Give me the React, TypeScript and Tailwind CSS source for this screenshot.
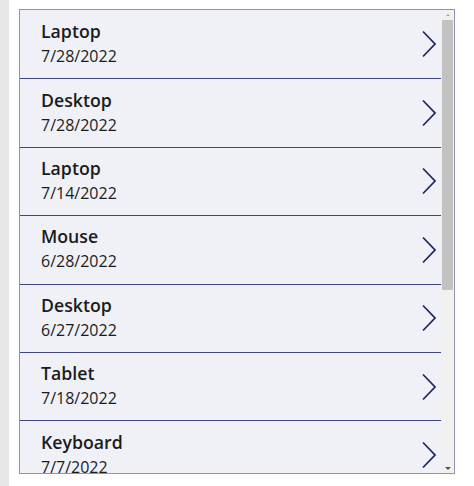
import React from "react";

const items = [
  { name: "Laptop", date: "7/28/2022" },
  { name: "Desktop", date: "7/28/2022" },
  { name: "Laptop", date: "7/14/2022" },
  { name: "Mouse", date: "6/28/2022" },
  { name: "Desktop", date: "6/27/2022" },
  { name: "Tablet", date: "7/18/2022" },
  { name: "Keyboard", date: "7/7/2022" },
];

function Chevron() {
  return (
    <svg width="16" height="28" viewBox="0 0 16 28" className="shrink-0">
      <path d="M2 1.5 L14 14 L2 26.5" fill="none" stroke="#1f2a63" strokeWidth="1.8" />
    </svg>
  );
}

export default function App() {
  return (
    <div
      className="flex w-[474px] h-[486px] bg-white"
      style={{ fontFamily: '"Open Sans", "Noto Sans", sans-serif' }}
    >
      <div className="w-[9px] h-full bg-[#e6e6e6]" />
      <div className="pl-[10px] pt-[9px]">
        <div className="relative flex w-[436px] h-[465px] border border-[#8e93b6] bg-[#eff1f7] overflow-hidden">
          <div className="flex-1 flex flex-col">
            {items.map((it, i) => (
              <div
                key={i}
                className={`flex items-center shrink-0 h-[68.4px] pl-[21px] pr-[4px] ${
                  i > 0 ? "border-t border-[#3d4682]" : ""
                }`}
              >
                <div className="flex-1 flex flex-col text-[#1b1b1b] -mt-[2px]">
                  <span className="text-[17.7px] font-semibold leading-[25px]">{it.name}</span>
                  <span className="text-[16px] leading-[24px]">{it.date}</span>
                </div>
                <Chevron />
              </div>
            ))}
          </div>
          <div className="w-[13px] h-full bg-[#f1f1f1] flex flex-col items-center">
            <div className="h-[10px] flex items-center justify-center">
              <div className="w-0 h-0 border-l-[2px] border-r-[2px] border-b-[2px] border-l-transparent border-r-transparent border-b-[#a3a3a3]" />
            </div>
            <div className="w-[11px] h-[270px] bg-[#c2c2c2]" />
            <div className="flex-1" />
            <div className="h-[10px] flex items-center justify-center">
              <div className="w-0 h-0 border-l-[3px] border-r-[3px] border-t-[3px] border-l-transparent border-r-transparent border-t-[#505050]" />
            </div>
          </div>
        </div>
      </div>
    </div>
  );
}
